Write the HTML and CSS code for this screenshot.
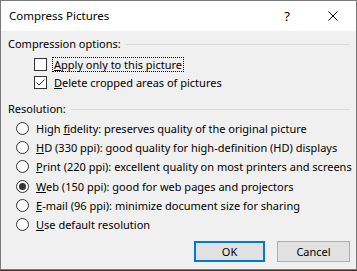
FILE: index.html
```html
<!DOCTYPE html>
<html>
<head>
<meta charset="utf-8">
<link rel="stylesheet" href="styles.css">
</head>
<body>
<div class="window">
  <div class="titlebar">
    <span class="title">Compress Pictures</span>
    <span class="tb-btn help">?</span>
    <span class="tb-btn close"><svg width="10" height="10" viewBox="0 0 10 10"><path d="M0.5 0.5 L9.5 9.5 M9.5 0.5 L0.5 9.5" stroke="#000" stroke-width="1" fill="none"/></svg></span>
  </div>
  <div class="content">
    <div class="group-head"><span>Compression options:</span><span class="rule"></span></div>
    <div class="checks">
      <div class="row"><span class="cb"></span><span class="label focus"><u>A</u>pply only to this picture</span></div>
      <div class="row"><span class="cb"><svg width="11" height="11" viewBox="0 0 11 11"><path d="M1.5 5.5 L4 8 L9.5 2.5" stroke="#333" stroke-width="1" fill="none"/></svg></span><span class="label"><u>D</u>elete cropped areas of pictures</span></div>
    </div>
    <div class="group-head res"><span>Resolution:</span><span class="rule"></span></div>
    <div class="radios">
      <div class="row"><span class="rb"></span><span class="label">High <u>f</u>idelity: preserves quality of the original picture</span></div>
      <div class="row"><span class="rb"></span><span class="label"><u>H</u>D (330 ppi): good quality for high-definition (HD) displays</span></div>
      <div class="row"><span class="rb"></span><span class="label"><u>P</u>rint (220 ppi): excellent quality on most printers and screens</span></div>
      <div class="row"><span class="rb on"></span><span class="label"><u>W</u>eb (150 ppi): good for web pages and projectors</span></div>
      <div class="row"><span class="rb"></span><span class="label"><u>E</u>-mail (96 ppi): minimize document size for sharing</span></div>
      <div class="row"><span class="rb"></span><span class="label"><u>U</u>se default resolution</span></div>
    </div>
    <div class="buttons">
      <span class="btn default">OK</span>
      <span class="btn">Cancel</span>
    </div>
  </div>
</div>
</body>
</html>
```
FILE: styles.css
```css
html, body { margin: 0; padding: 0; }
body {
  background: #3b342e;
  width: 357px;
  height: 271px;
  overflow: hidden;
  font-family: "Noto Sans", "Open Sans", sans-serif;
  font-size: 11px;
  color: #000;
}
.window {
  box-sizing: border-box;
  width: 357px;
  height: 270px;
  border: 1px solid #7a7a7a;
  background: #f0f0f0;
  display: flex;
  flex-direction: column;
}
.titlebar {
  height: 30px;
  background: #fff;
  display: flex;
  align-items: center;
}
.title {
  flex: 1;
  padding-left: 8px;
  padding-bottom: 1px;
  font-size: 11.5px;
}
.tb-btn {
  width: 46px;
  height: 30px;
  display: flex;
  align-items: center;
  justify-content: center;
}
.help { font-size: 13px; }
.content {
  flex: 1;
  display: flex;
  flex-direction: column;
  padding: 5px 6px 7px 7px;
}
.group-head {
  display: flex;
  align-items: center;
  height: 16px;
  line-height: 16px;
}
.group-head .rule {
  flex: 1;
  height: 1px;
  background: #dcdcdc;
  margin-left: 5px;
}
.group-head.res { margin-top: 10px; }
.checks {
  padding-left: 26px;
  margin-top: 3px;
}
.checks .row {
  display: flex;
  align-items: center;
  height: 18px;
}
.cb {
  flex-shrink: 0;
  box-sizing: border-box;
  width: 13px;
  height: 13px;
  border: 1px solid #333;
  background: #fff;
  display: flex;
  align-items: center;
  justify-content: center;
}
.label {
  margin-left: 7px;
  line-height: 13px;
  white-space: nowrap;
}
.label.focus {
  outline: 1px dotted #000;
  outline-offset: 0;
  padding: 0 1px;
  margin-left: 6px;
}
.radios {
  padding-left: 8px;
  margin-top: 2px;
}
.radios .row {
  display: flex;
  align-items: center;
  height: 19.2px;
}
.rb {
  flex-shrink: 0;
  box-sizing: border-box;
  width: 13px;
  height: 13px;
  border: 1px solid #333;
  border-radius: 50%;
  background: #fff;
  display: flex;
  align-items: center;
  justify-content: center;
}
.rb.on::after {
  content: "";
  width: 7px;
  height: 7px;
  border-radius: 50%;
  background: #333;
}
.radios .label { margin-left: 7px; }
.buttons {
  margin-top: auto;
  display: flex;
  justify-content: flex-end;
  gap: 12px;
}
.btn {
  box-sizing: border-box;
  width: 73px;
  height: 21px;
  background: #e1e1e1;
  border: 1px solid #adadad;
  display: flex;
  align-items: center;
  justify-content: center;
}
.btn.default {
  width: 71px;
  border: 2px solid #0078d7;
}
```
